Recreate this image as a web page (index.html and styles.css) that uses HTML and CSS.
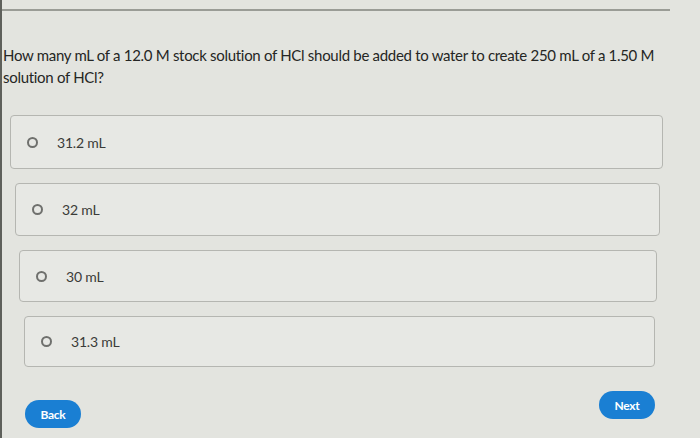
FILE: index.html
```html
<!DOCTYPE html>
<html lang="en">
<head>
    <meta charset="UTF-8">
    <meta name="viewport" content="width=device-width, initial-scale=1.0">
    <title>Quiz Question</title>
    <link rel="stylesheet" href="styles.css">
</head>
<body>
    <div class="quiz">
        <div class="rule"></div>
        <p class="question">How many mL of a 12.0 M stock solution of HCl should be added to water to create 250 mL of a 1.50 M solution of HCl?</p>
        <div class="answers">
            <label class="answer"><span class="radio"></span><span class="answer-text">31.2 mL</span></label>
            <label class="answer"><span class="radio"></span><span class="answer-text">32 mL</span></label>
            <label class="answer"><span class="radio"></span><span class="answer-text">30 mL</span></label>
            <label class="answer"><span class="radio"></span><span class="answer-text">31.3 mL</span></label>
        </div>
        <div class="nav">
            <button class="btn btn-back">Back</button>
            <button class="btn btn-next">Next</button>
        </div>
    </div>
</body>
</html>
```

FILE: styles.css
```css
html, body {
    margin: 0;
    height: 100%;
}

body {
    font-family: Lato, 'Noto Sans', sans-serif;
    background-color: #e3e4df; /* light grey page */
    color: #252624;
}

.quiz {
    height: 100%;
    box-sizing: border-box;
    border-left: 2px solid #5e605b;
    padding-top: 9px;
}

.rule {
    width: 668px;
    height: 2px;
    background-color: #9a9c96;
}

.question {
    margin: 33px 40px 0 1px;
    font-size: 15px;
    line-height: 22px;
    letter-spacing: -0.3px;
}

.answers {
    display: flex;
    flex-direction: column;
    gap: 14px;
    margin-top: 27px;
}

.answer {
    display: flex;
    align-items: center;
    height: 52px;
    box-sizing: border-box;
    padding-left: 16px;
    border: 1px solid #b5b6b1;
    border-radius: 4px;
    background-color: #e7e8e4;
    color: #3a3b38;
    font-size: 14px;
    letter-spacing: -0.2px;
}

/* the screen was shot at a slight angle, rows drift right */
.answer:nth-child(1) { margin: 0 37px 0 8px; height: 54px; }
.answer:nth-child(2) { margin: 0 40px 0 13px; height: 53px; }
.answer:nth-child(3) { margin: 0 43px 0 17px; }
.answer:nth-child(4) { margin: 0 45px 0 22px; height: 51px; }

.radio {
    width: 7px;
    height: 7px;
    border: 2px solid #6f706d;
    border-radius: 50%;
    flex-shrink: 0;
}

.answer-text {
    margin-left: 19px;
}

.nav {
    display: flex;
    justify-content: space-between;
    align-items: flex-start;
    margin: 24px 45px 0 23px;
}

.btn {
    width: 56px;
    height: 28px;
    border: none;
    border-radius: 14px;
    background-color: #1a7fd3; /* bright blue */
    color: #ffffff;
    font-family: Lato, 'Noto Sans', sans-serif;
    font-weight: bold;
    font-size: 12px;
    letter-spacing: -0.3px;
    cursor: pointer;
}

.btn-back {
    margin-top: 9px;
}
```
